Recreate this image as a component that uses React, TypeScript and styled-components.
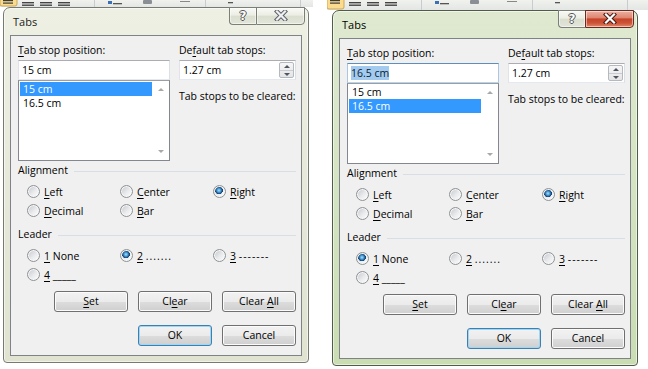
import React from "react";
import styled, { createGlobalStyle } from "styled-components";

const GlobalStyle = createGlobalStyle`
  html, body { margin: 0; padding: 0; background: #ffffff; }
  body {
    font-family: "Open Sans", "Noto Sans", sans-serif;
    font-size: 10.5px;
    color: #000;
  }
`;

const Page = styled.div`
  width: 648px;
  height: 369px;
  overflow: hidden;
  display: flex;
  gap: 14px;
  background: #ffffff;
`;

const Shot = styled.div<{ $w: number }>`
  width: ${(p) => p.$w}px;
  flex: none;
  display: flex;
  flex-direction: column;
  background: #ffffff;
`;

const Ribbon = styled.div<{ $h: number }>`
  height: ${(p) => p.$h}px;
  flex: none;
  overflow: hidden;
  background: linear-gradient(#f1f2ee, #e3e6e4);
  svg { display: block; }
`;

const WindowRow = styled.div<{ $left: number }>`
  display: flex;
  padding-left: ${(p) => p.$left}px;
`;

const Window = styled.div<{ $active: boolean }>`
  width: 306px;
  box-sizing: border-box;
  border: 1px solid ${(p) => (p.$active ? "#4f5c48" : "#767b72")};
  border-radius: 7px 7px 4px 4px;
  background: ${(p) =>
    p.$active
      ? "linear-gradient(#dfe9d0, #d2e2bf 60%, #c9dcb2)"
      : "linear-gradient(#eef0e4, #e5e8d8 60%, #dfe3d0)"};
  box-shadow: inset 0 0 0 1px rgba(255, 255, 255, 0.55);
  padding: 0 6px 6px;
  display: flex;
  flex-direction: column;
`;

const TitleBar = styled.div`
  height: 27px;
  display: flex;
  justify-content: space-between;
  align-items: flex-start;
  margin-right: -3px;
`;

const Title = styled.div<{ $active: boolean }>`
  font-size: 11px;
  line-height: 27px;
  padding-left: 3px;
  color: ${(p) => (p.$active ? "#000" : "#1a1a1a")};
`;

const CaptionGroup = styled.div`
  display: flex;
  margin-top: -1px;
`;

const CaptionButton = styled.div<{ $kind: "help" | "close"; $active: boolean }>`
  height: 18px;
  box-sizing: border-box;
  width: ${(p) => (p.$kind === "help" ? 27 : 49)}px;
  border: 1px solid
    ${(p) => (p.$kind === "close" && p.$active ? "#6b2a1e" : "#7a7f78")};
  ${(p) => (p.$kind === "help" ? "border-right: none;" : "")}
  border-radius: ${(p) => (p.$kind === "help" ? "0 0 0 4px" : "0 0 4px 0")};
  background: ${(p) =>
    p.$kind === "close" && p.$active
      ? "linear-gradient(#eab0a2 0%, #de8670 42%, #c7432a 50%, #cc5236 75%, #e08a6c 100%)"
      : "linear-gradient(#f8f9f4 0%, #eceee5 45%, #dadecf 50%, #e2e5d9 100%)"};
  box-shadow: inset 0 0 0 1px rgba(255, 255, 255, 0.5);
  display: flex;
  align-items: center;
  justify-content: center;
  padding-bottom: 1px;
`;

const HelpGlyph = styled.span`
  font-family: "DejaVu Sans", sans-serif;
  font-weight: bold;
  font-size: 12px;
  line-height: 1;
  color: #fbfbfb;
  text-shadow: 1px 0 #555, -1px 0 #555, 0 1px #555, 0 -1px #555;
`;

const Client = styled.div`
  border: 1px solid #7e8388;
  background: #f0f0f0;
  padding: 7px 5px 9px 7px;
  display: flex;
  flex-direction: column;
`;

const TopGrid = styled.div`
  display: grid;
  grid-template-columns: 152px 117px;
  column-gap: 9px;
`;

const Column = styled.div`
  display: flex;
  flex-direction: column;
`;

const Label = styled.div<{ $gapTop?: number }>`
  line-height: 15px;
  margin-bottom: 2px;
  margin-top: ${(p) => p.$gapTop ?? 0}px;
  white-space: nowrap;
`;

const Key = styled.u`
  text-decoration: underline;
  text-underline-offset: 2px;
`;

const Fill = styled.span`
  letter-spacing: 1px;
`;

const TextBox = styled.div<{ $focused?: boolean }>`
  height: 20px;
  box-sizing: border-box;
  border: 1px solid;
  border-color: ${(p) =>
    p.$focused
      ? "#5c8fbf #a9c7e2 #b7d4ec #a9c7e2"
      : "#abadb3 #dbdfe6 #e3e9ef #e2e3ea"};
  background: #fff;
  padding: 0 1px 0 3px;
  display: flex;
  align-items: center;
  line-height: 15px;
`;

const BoxText = styled.span`
  flex: 1;
  white-space: nowrap;
`;

const SelText = styled.span`
  background: #a3cbef;
  color: #0c1d30;
`;

const Spin = styled.div`
  width: 15px;
  height: 16px;
  box-sizing: border-box;
  border: 1px solid #b4b9c0;
  border-radius: 2px;
  display: grid;
  grid-template-rows: 1fr 1fr;
  background: linear-gradient(#f6f6f6, #e4e4e4);
`;

const SpinHalf = styled.div<{ $down?: boolean }>`
  display: flex;
  align-items: center;
  justify-content: center;
  ${(p) => (p.$down ? "border-top: 1px solid #c8ccd2;" : "")}
  &::before {
    content: "";
    border-left: 3px solid transparent;
    border-right: 3px solid transparent;
    ${(p) =>
      p.$down ? "border-top: 3px solid #4d5560;" : "border-bottom: 3px solid #4d5560;"}
  }
`;

const ListBox = styled.div`
  height: 81px;
  box-sizing: border-box;
  border: 1px solid #828790;
  border-top-color: #9a9ea5;
  background: #fff;
  display: flex;
`;

const ListItems = styled.div`
  flex: 1;
  padding: 1px 0 1px 1px;
`;

const ListItem = styled.div<{ $selected: boolean }>`
  height: 14px;
  line-height: 14px;
  padding-left: 3px;
  white-space: nowrap;
  background: ${(p) => (p.$selected ? "#3399ff" : "transparent")};
  color: ${(p) => (p.$selected ? "#fff" : "#000")};
`;

const ScrollBar = styled.div`
  width: 17px;
  display: flex;
  flex-direction: column;
  justify-content: space-between;
`;

const ScrollArrow = styled.div<{ $down?: boolean }>`
  height: 17px;
  display: flex;
  align-items: center;
  justify-content: center;
  &::before {
    content: "";
    border-left: 3px solid transparent;
    border-right: 3px solid transparent;
    ${(p) =>
      p.$down ? "border-top: 3px solid #a8a8a8;" : "border-bottom: 3px solid #a8a8a8;"}
  }
`;

const GroupHeader = styled.div<{ $gapTop: number }>`
  margin-top: ${(p) => p.$gapTop}px;
  line-height: 15px;
  display: flex;
  align-items: center;
  gap: 6px;
  &::after {
    content: "";
    flex: 1;
    height: 1px;
    background: #d8dfe4;
    margin-top: 1px;
  }
`;

const RadioGrid = styled.div`
  margin-top: 4px;
  padding-left: 9px;
  display: grid;
  grid-template-columns: 93px 93px 1fr;
  grid-auto-rows: 19px;
`;

const RadioItem = styled.div`
  display: flex;
  align-items: center;
  gap: 4px;
  white-space: nowrap;
`;

const RadioDot = styled.span<{ $checked: boolean }>`
  width: 13px;
  height: 13px;
  flex: none;
  box-sizing: border-box;
  border-radius: 50%;
  border: 1px solid #8f9294;
  box-shadow: inset 0 0 0 1px #f7f7f7;
  background: ${(p) =>
    p.$checked
      ? "radial-gradient(circle at 45% 40%, #a9e0fb 0px, #4d9fd6 1.8px, #1f5a95 3px, #173f6a 3.7px, transparent 4.1px), linear-gradient(135deg, #c4c7cb 0%, #e9ebed 55%, #ffffff 100%)"
      : "linear-gradient(135deg, #c4c7cb 0%, #e9ebed 55%, #ffffff 100%)"};
`;

const ButtonRow = styled.div<{ $gapTop: number }>`
  margin-top: ${(p) => p.$gapTop}px;
  display: flex;
  justify-content: flex-end;
  gap: 10px;
`;

const Button = styled.div<{ $default?: boolean }>`
  width: 74px;
  height: 21px;
  box-sizing: border-box;
  border: 1px solid ${(p) => (p.$default ? "#3c7fb1" : "#707070")};
  border-radius: 3px;
  background: linear-gradient(#f2f2f2 0%, #ebebeb 50%, #dddddd 51%, #cfcfcf 100%);
  box-shadow: inset 0 0 0 1px ${(p) => (p.$default ? "#9fd6f4" : "#fbfbfb")};
  display: flex;
  align-items: center;
  justify-content: center;
  line-height: 15px;
`;

const RibbonArt = ({ w, h }: { w: number; h: number }) => (
  <svg width={w} height={h} viewBox={`0 0 ${w} ${h}`}>
    <rect x="0" y="-4" width="17" height={h + 3} rx="2" fill="#fbdc8e" stroke="#c9a55a" />
    {[3, 5.5].map((y) => (
      <rect key={y} x="3" y={y - 3} width="10" height="1.2" fill="#3a3a3a" />
    ))}
    {[22, 40, 58].map((x) =>
      [2, 4.5].map((y) => (
        <rect key={`${x}-${y}`} x={x} y={y} width="12" height="1.4" fill="#444" />
      ))
    )}
    <rect x="94" y="0" width="1" height={h} fill="#c8ccd0" />
    <rect x="108" y="1" width="4" height="3" fill="#3b6fb6" />
    <rect x="113" y="3" width="9" height="1.3" fill="#555" />
    <rect x="143" y="0" width="9" height="4" rx="1" fill="#8a8f96" />
    <rect x="180" y="1" width="10" height="1" fill="#888" />
    <rect x="205" y="0" width="1" height={h} fill="#c8ccd0" />
    <rect x="228" y="2" width="5" height="1.3" fill="#555" />
    <rect x="300" y="0" width="1" height={h} fill="#c8ccd0" />
  </svg>
);

const CloseGlyph = ({ active }: { active: boolean }) => (
  <svg width="14" height="11" viewBox="0 0 14 11">
    <path
      d="M3 1.5 L11 9.5 M11 1.5 L3 9.5"
      stroke={active ? "#4a1a12" : "#5d6068"}
      strokeWidth="4.2"
      strokeLinecap="square"
      fill="none"
    />
    <path
      d="M3 1.5 L11 9.5 M11 1.5 L3 9.5"
      stroke={active ? "#ffffff" : "#eef0f2"}
      strokeWidth="2.2"
      strokeLinecap="square"
      fill="none"
    />
  </svg>
);

const Radio = ({ checked, children }: { checked: boolean; children: React.ReactNode }) => (
  <RadioItem>
    <RadioDot $checked={checked} />
    <span>{children}</span>
  </RadioItem>
);

type DialogProps = {
  active: boolean;
  value: string;
  valueSelected: boolean;
  selected: number;
  leader: number;
};

const stops = ["15 cm", "16.5 cm"];

const TabsDialog = ({ active, value, valueSelected, selected, leader }: DialogProps) => (
  <Window $active={active}>
    <TitleBar>
      <Title $active={active}>Tabs</Title>
      <CaptionGroup>
        <CaptionButton $kind="help" $active={active}>
          <HelpGlyph>?</HelpGlyph>
        </CaptionButton>
        <CaptionButton $kind="close" $active={active}>
          <CloseGlyph active={active} />
        </CaptionButton>
      </CaptionGroup>
    </TitleBar>
    <Client>
      <TopGrid>
        <Column>
          <Label>
            <Key>T</Key>ab stop position:
          </Label>
          <TextBox $focused={valueSelected}>
            <BoxText>{valueSelected ? <SelText>{value}</SelText> : value}</BoxText>
          </TextBox>
          <ListBox>
            <ListItems>
              {stops.map((s, i) => (
                <ListItem key={s} $selected={i === selected}>
                  {s}
                </ListItem>
              ))}
            </ListItems>
            <ScrollBar>
              <ScrollArrow />
              <ScrollArrow $down />
            </ScrollBar>
          </ListBox>
        </Column>
        <Column>
          <Label>
            De<Key>f</Key>ault tab stops:
          </Label>
          <TextBox>
            <BoxText>1.27 cm</BoxText>
            <Spin>
              <SpinHalf />
              <SpinHalf $down />
            </Spin>
          </TextBox>
          <Label $gapTop={9}>Tab stops to be cleared:</Label>
        </Column>
      </TopGrid>

      <GroupHeader $gapTop={2}>Alignment</GroupHeader>
      <RadioGrid>
        <Radio checked={false}>
          <Key>L</Key>eft
        </Radio>
        <Radio checked={false}>
          <Key>C</Key>enter
        </Radio>
        <Radio checked={true}>
          <Key>R</Key>ight
        </Radio>
        <Radio checked={false}>
          <Key>D</Key>ecimal
        </Radio>
        <Radio checked={false}>
          <Key>B</Key>ar
        </Radio>
      </RadioGrid>

      <GroupHeader $gapTop={7}>Leader</GroupHeader>
      <RadioGrid>
        <Radio checked={leader === 1}>
          <Key>1</Key> None
        </Radio>
        <Radio checked={leader === 2}>
          <Key>2</Key> <Fill>.......</Fill>
        </Radio>
        <Radio checked={leader === 3}>
          <Key>3</Key> <Fill>-------</Fill>
        </Radio>
        <Radio checked={leader === 4}>
          <Key>4</Key> _____
        </Radio>
      </RadioGrid>

      <ButtonRow $gapTop={7}>
        <Button>
          <span>
            <Key>S</Key>et
          </span>
        </Button>
        <Button>
          <span>
            Cl<Key>e</Key>ar
          </span>
        </Button>
        <Button>
          <span>
            Clear <Key>A</Key>ll
          </span>
        </Button>
      </ButtonRow>
      <ButtonRow $gapTop={13}>
        <Button $default>OK</Button>
        <Button>Cancel</Button>
      </ButtonRow>
    </Client>
  </Window>
);

export default function App() {
  return (
    <>
      <GlobalStyle />
      <Page>
        <Shot $w={313}>
          <Ribbon $h={7}>
            <RibbonArt w={313} h={7} />
          </Ribbon>
          <WindowRow $left={3}>
            <TabsDialog active={false} value="15 cm" valueSelected={false} selected={0} leader={2} />
          </WindowRow>
        </Shot>
        <Shot $w={321}>
          <Ribbon $h={10}>
            <RibbonArt w={321} h={10} />
          </Ribbon>
          <WindowRow $left={5}>
            <TabsDialog active={true} value="16.5 cm" valueSelected={true} selected={1} leader={1} />
          </WindowRow>
        </Shot>
      </Page>
    </>
  );
}
